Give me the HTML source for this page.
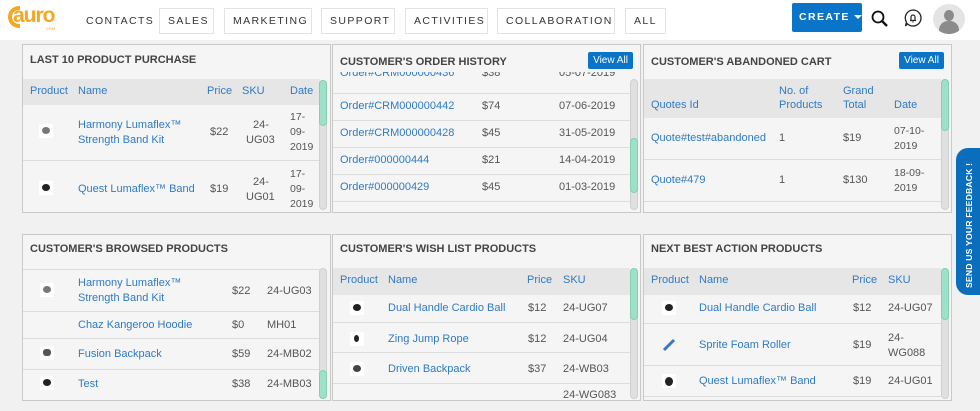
<!DOCTYPE html><html><head><meta charset="utf-8"><style>
*{margin:0;padding:0;box-sizing:border-box}
body{width:980px;height:411px;overflow:hidden;background:#f1f1f1;font-family:"Liberation Sans",sans-serif;font-size:11px;color:#555;position:relative}
.a{position:absolute;white-space:nowrap;line-height:14px}
.hdr{position:absolute;left:0;top:0;width:980px;height:40px;background:#fff}
.nav{position:absolute;top:8px;height:26px;border:1px solid #e3e3e3;font-size:10.5px;letter-spacing:1.4px;color:#333;line-height:24px;padding-left:8px}
.p{position:absolute;background:#f5f5f5;border:1px solid #c9c9c9}
.t{font-weight:bold;color:#444;font-size:11px}
.l{color:#2f7bc4}
.h{color:#2f7bc4}
.band{position:absolute;background:#e6e6e6}
.ln{position:absolute;height:1px;background:#dcdcdc}
.sb{position:absolute;width:8px;border-radius:4px;background:#e0e0e0;border:1px solid #d0d0d0}
.th{position:absolute;width:8px;border-radius:4px;background:#9fe0c8;border:1px solid #85cfb3}
.btn{position:absolute;background:#0a74c9;color:#fff;border-radius:2px;font-size:10px;text-align:center;line-height:17px}
.img{position:absolute;width:14px;height:14px;background:#fff}
.img i{position:absolute;left:3px;top:3px;width:8px;height:7px;border-radius:50%;background:#222}
.d{font-size:10.5px}
</style></head><body>
<div class="hdr"></div>
<div class="a" style="left:8px;top:6px;width:12px;height:22px;border:4px solid #f5a623;border-right:none;border-radius:12px 0 0 12px"></div>
<div class="a" style="left:13px;top:3px;font-size:21px;font-weight:bold;color:#f5a623;line-height:26px;letter-spacing:-1px">auro</div>
<div class="a" style="left:46px;top:26px;font-size:4px;color:#f5a623;line-height:5px">CRM</div>
<div class="a" style="left:86px;top:14px;font-size:10.5px;letter-spacing:1.4px;color:#333">CONTACTS</div>
<div class="nav" style="left:159px;width:55px">SALES</div>
<div class="nav" style="left:224px;width:88px">MARKETING</div>
<div class="nav" style="left:321px;width:74px">SUPPORT</div>
<div class="nav" style="left:405px;width:83px">ACTIVITIES</div>
<div class="nav" style="left:497px;width:118px">COLLABORATION</div>
<div class="nav" style="left:625px;width:41px">ALL</div>
<div class="a" style="left:792px;top:3px;width:70px;height:29px;background:#0a74c9;border-radius:2px;color:#fff;font-weight:bold;font-size:10.5px;letter-spacing:1.4px;line-height:29px;padding-left:7px">CREATE <span style="display:inline-block;width:0;height:0;border-left:4px solid transparent;border-right:4px solid transparent;border-top:4px solid #fff;vertical-align:middle"></span></div>
<svg class="a" style="left:870px;top:9px" width="20" height="20" viewBox="0 0 20 20"><circle cx="8" cy="8" r="5.5" fill="none" stroke="#111" stroke-width="1.8"/><path d="M12 12l5 5" stroke="#111" stroke-width="2.4"/></svg>
<svg class="a" style="left:903px;top:8px" width="20" height="20" viewBox="0 0 20 20"><path d="M10 2a8 8 0 1 1-5.5 13.8L2.5 18l1-3.8A8 8 0 0 1 10 2z" fill="none" stroke="#222" stroke-width="1.3"/><path d="M7 12.5h6M8 12V9a2 2 0 0 1 4 0v3M9.5 14h1" stroke="#222" stroke-width="1.2" fill="none"/></svg>
<div class="a" style="left:933px;top:4px;width:32px;height:30px;border-radius:50%;background:#e4e4e4;overflow:hidden"><div style="position:absolute;left:11px;top:6px;width:10px;height:11px;border-radius:50%;background:#8b8b8b"></div><div style="position:absolute;left:6px;top:17px;width:20px;height:14px;border-radius:9px 9px 0 0;background:#8b8b8b"></div></div>

<div class="p" style="left:22px;top:44px;width:309px;height:169px"></div>
<div class="a t" style="left:30px;top:53px">LAST 10 PRODUCT PURCHASE</div>
<div class="band" style="left:23px;top:79px;width:297px;height:26px"></div>
<div class="a h" style="left:30px;top:84px">Product</div><div class="a h" style="left:78px;top:84px">Name</div><div class="a h" style="left:207px;top:84px">Price</div><div class="a h" style="left:242px;top:84px">SKU</div><div class="a h" style="left:290px;top:84px">Date</div>
<div class="img" style="left:39px;top:124px"><i style="background:#777"></i></div>
<div class="a l" style="left:78px;top:118px">Harmony Lumaflex™</div><div class="a l" style="left:78px;top:133px">Strength Band Kit</div>
<div class="a" style="left:210px;top:125px">$22</div><div class="a" style="left:253px;top:118px">24-</div><div class="a" style="left:246px;top:133px">UG03</div>
<div class="a d" style="left:290px;top:110px">17-</div><div class="a d" style="left:290px;top:125px">09-</div><div class="a d" style="left:290px;top:140px">2019</div>
<div class="ln" style="left:23px;top:160px;width:297px"></div>
<div class="img" style="left:39px;top:181px"><i></i></div>
<div class="a l" style="left:78px;top:182px">Quest Lumaflex™ Band</div>
<div class="a" style="left:210px;top:182px">$19</div><div class="a" style="left:253px;top:175px">24-</div><div class="a" style="left:246px;top:190px">UG01</div>
<div class="a d" style="left:290px;top:167px">17-</div><div class="a d" style="left:290px;top:182px">09-</div><div class="a d" style="left:290px;top:197px">2019</div>
<div class="sb" style="left:319px;top:80px;height:130px"></div><div class="th" style="left:319px;top:80px;height:46px"></div>

<div class="p" style="left:332px;top:44px;width:309px;height:169px"></div>
<div class="a t" style="left:340px;top:55px">CUSTOMER'S ORDER HISTORY</div>
<div class="btn" style="left:588px;top:52px;width:45px">View All</div>
<div style="position:absolute;left:333px;top:72px;width:297px;height:14px;overflow:hidden"><div class="a l" style="left:7px;top:-6px">Order#CRM000000436</div><div class="a" style="left:149px;top:-6px">$38</div><div class="a" style="left:226px;top:-6px">05-07-2019</div></div>
<div class="ln" style="left:333px;top:93px;width:297px"></div>
<div class="a l" style="left:340px;top:99px">Order#CRM000000442</div><div class="a" style="left:482px;top:99px">$74</div><div class="a" style="left:559px;top:99px">07-06-2019</div>
<div class="ln" style="left:333px;top:120px;width:297px"></div>
<div class="a l" style="left:340px;top:126px">Order#CRM000000428</div><div class="a" style="left:482px;top:126px">$45</div><div class="a" style="left:559px;top:126px">31-05-2019</div>
<div class="ln" style="left:333px;top:147px;width:297px"></div>
<div class="a l" style="left:340px;top:153px">Order#000000444</div><div class="a" style="left:482px;top:153px">$21</div><div class="a" style="left:559px;top:153px">14-04-2019</div>
<div class="ln" style="left:333px;top:174px;width:297px"></div>
<div class="a l" style="left:340px;top:180px">Order#000000429</div><div class="a" style="left:482px;top:180px">$45</div><div class="a" style="left:559px;top:180px">01-03-2019</div>
<div class="ln" style="left:333px;top:201px;width:297px"></div>
<div class="sb" style="left:630px;top:79px;height:131px"></div><div class="th" style="left:630px;top:138px;height:55px"></div>

<div class="p" style="left:643px;top:44px;width:309px;height:169px"></div>
<div class="a t" style="left:651px;top:55px">CUSTOMER'S ABANDONED CART</div>
<div class="btn" style="left:899px;top:52px;width:45px">View All</div>
<div class="band" style="left:644px;top:79px;width:297px;height:39px"></div>
<div class="a h" style="left:651px;top:98px">Quotes Id</div><div class="a h" style="left:779px;top:84px">No. of</div><div class="a h" style="left:779px;top:98px">Products</div><div class="a h" style="left:843px;top:84px">Grand</div><div class="a h" style="left:843px;top:98px">Total</div><div class="a h" style="left:894px;top:98px">Date</div>
<div class="a l" style="left:651px;top:131px">Quote#test#abandoned</div><div class="a" style="left:779px;top:131px">1</div><div class="a" style="left:843px;top:131px">$19</div><div class="a d" style="left:894px;top:124px">07-10-</div><div class="a d" style="left:894px;top:139px">2019</div>
<div class="ln" style="left:644px;top:159px;width:297px"></div>
<div class="a l" style="left:651px;top:173px">Quote#479</div><div class="a" style="left:779px;top:173px">1</div><div class="a" style="left:843px;top:173px">$130</div><div class="a d" style="left:894px;top:166px">18-09-</div><div class="a d" style="left:894px;top:181px">2019</div>
<div class="ln" style="left:644px;top:201px;width:297px"></div>
<div class="sb" style="left:941px;top:79px;height:131px"></div><div class="th" style="left:941px;top:79px;height:52px"></div>

<div class="p" style="left:22px;top:234px;width:309px;height:167px"></div>
<div class="a t" style="left:30px;top:242px">CUSTOMER'S BROWSED PRODUCTS</div>
<div class="ln" style="left:23px;top:269px;width:297px"></div>
<div class="img" style="left:40px;top:283px"><i style="background:#777"></i></div>
<div class="a l" style="left:78px;top:276px">Harmony Lumaflex™</div><div class="a l" style="left:78px;top:291px">Strength Band Kit</div><div class="a" style="left:232px;top:284px">$22</div><div class="a" style="left:267px;top:284px">24-UG03</div>
<div class="ln" style="left:23px;top:311px;width:297px"></div>
<div class="a l" style="left:78px;top:318px">Chaz Kangeroo Hoodie</div><div class="a" style="left:232px;top:318px">$0</div><div class="a" style="left:267px;top:318px">MH01</div>
<div class="ln" style="left:23px;top:338px;width:297px"></div>
<div class="img" style="left:40px;top:346px"><i style="background:#555;border-radius:3px"></i></div>
<div class="a l" style="left:78px;top:347px">Fusion Backpack</div><div class="a" style="left:232px;top:347px">$59</div><div class="a" style="left:267px;top:347px">24-MB02</div>
<div class="ln" style="left:23px;top:369px;width:297px"></div>
<div class="img" style="left:40px;top:376px"><i></i></div>
<div class="a l" style="left:78px;top:377px">Test</div><div class="a" style="left:232px;top:377px">$38</div><div class="a" style="left:267px;top:377px">24-MB03</div>
<div class="sb" style="left:319px;top:268px;height:131px"></div><div class="th" style="left:319px;top:370px;height:29px"></div>

<div class="p" style="left:332px;top:234px;width:309px;height:167px"></div>
<div class="a t" style="left:340px;top:242px">CUSTOMER'S WISH LIST PRODUCTS</div>
<div class="band" style="left:333px;top:268px;width:297px;height:27px"></div>
<div class="a h" style="left:340px;top:273px">Product</div><div class="a h" style="left:388px;top:273px">Name</div><div class="a h" style="left:527px;top:273px">Price</div><div class="a h" style="left:563px;top:273px">SKU</div>
<div class="img" style="left:350px;top:301px"><i></i></div>
<div class="a l" style="left:388px;top:301px">Dual Handle Cardio Ball</div><div class="a" style="left:528px;top:301px">$12</div><div class="a" style="left:563px;top:301px">24-UG07</div>
<div class="ln" style="left:333px;top:322px;width:297px"></div>
<div class="img" style="left:350px;top:332px"><i style="width:5px;left:4px"></i></div>
<div class="a l" style="left:388px;top:332px">Zing Jump Rope</div><div class="a" style="left:528px;top:332px">$12</div><div class="a" style="left:563px;top:332px">24-UG04</div>
<div class="ln" style="left:333px;top:352px;width:297px"></div>
<div class="img" style="left:350px;top:362px"><i style="background:#444"></i></div>
<div class="a l" style="left:388px;top:362px">Driven Backpack</div><div class="a" style="left:528px;top:362px">$37</div><div class="a" style="left:563px;top:362px">24-WB03</div>
<div class="ln" style="left:333px;top:383px;width:297px"></div>
<div style="position:absolute;left:333px;top:384px;width:297px;height:16px;overflow:hidden"><div class="a" style="left:230px;top:4px">24-WG083</div></div>
<div class="sb" style="left:630px;top:268px;height:131px"></div><div class="th" style="left:630px;top:268px;height:52px"></div>

<div class="p" style="left:643px;top:234px;width:309px;height:167px"></div>
<div class="a t" style="left:651px;top:242px">NEXT BEST ACTION PRODUCTS</div>
<div class="band" style="left:644px;top:268px;width:297px;height:27px"></div>
<div class="a h" style="left:651px;top:273px">Product</div><div class="a h" style="left:699px;top:273px">Name</div><div class="a h" style="left:852px;top:273px">Price</div><div class="a h" style="left:888px;top:273px">SKU</div>
<div class="img" style="left:662px;top:301px"><i></i></div>
<div class="a l" style="left:699px;top:301px">Dual Handle Cardio Ball</div><div class="a" style="left:853px;top:301px">$12</div><div class="a" style="left:888px;top:301px">24-UG07</div>
<div class="ln" style="left:644px;top:323px;width:297px"></div>
<svg class="a" style="left:662px;top:338px" width="14" height="14"><path d="M2 12L12 2" stroke="#3a78c4" stroke-width="3"/></svg>
<div class="a l" style="left:699px;top:338px">Sprite Foam Roller</div><div class="a" style="left:853px;top:338px">$19</div><div class="a" style="left:888px;top:331px">24-</div><div class="a" style="left:888px;top:346px">WG088</div>
<div class="ln" style="left:644px;top:365px;width:297px"></div>
<div class="img" style="left:662px;top:374px"><i style="height:9px"></i></div>
<div class="a l" style="left:699px;top:374px">Quest Lumaflex™ Band</div><div class="a" style="left:853px;top:374px">$19</div><div class="a" style="left:888px;top:374px">24-UG01</div>
<div class="ln" style="left:644px;top:396px;width:297px"></div>
<div class="sb" style="left:941px;top:268px;height:131px"></div><div class="th" style="left:941px;top:268px;height:52px"></div>

<div class="a" style="left:956px;top:148px;width:26px;height:147px;background:#0a6ebd;border-radius:12px 0 0 12px"></div>
<div class="a" style="left:962px;top:288px;transform:rotate(-90deg);transform-origin:0 0;color:#fff;font-weight:bold;font-size:8.6px;letter-spacing:0.2px">SEND US YOUR FEEDBACK !</div>
</body></html>
